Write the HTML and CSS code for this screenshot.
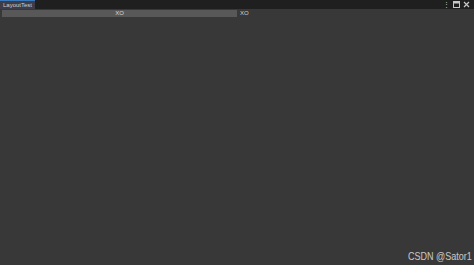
FILE: index.html
```html
<!DOCTYPE html>
<html>
<head>
<meta charset="utf-8">
<link rel="stylesheet" href="styles.css">
</head>
<body>
<div class="window">
  <div class="titlebar">
    <div class="tab">LayoutTest</div>
    <div class="controls">
      <span class="kebab">⋮</span>
      <svg class="max" width="7" height="7" viewBox="0 0 7 7"><rect x="0.5" y="0.5" width="6" height="6" fill="none" stroke="#c8c8c8" stroke-width="1"/><rect x="0.5" y="0.5" width="6" height="2" fill="#c8c8c8"/></svg>
      <svg class="close" width="7" height="7" viewBox="0 0 7 7"><path d="M1 1L6 6M6 1L1 6" stroke="#c8c8c8" stroke-width="1.2"/></svg>
    </div>
  </div>
  <div class="content">
    <div class="row">
      <div class="bar">XO</div>
      <div class="label">XO</div>
    </div>
  </div>
  <div class="watermark">CSDN @Sator1</div>
</div>
</body>
</html>
```
FILE: styles.css
```css
html, body { margin: 0; padding: 0; }
body { width: 474px; height: 265px; background: #383838; font-family: "Liberation Sans", Arial, sans-serif; overflow: hidden; }
.window { position: relative; width: 474px; height: 265px; display: flex; flex-direction: column; }
.titlebar { height: 9px; background: #1f1f1f; display: flex; align-items: stretch; justify-content: space-between; }
.tab { width: 35px; background: #3c3d48; border-top: 1px solid #3a79bb; color: #cfcfcf; font-size: 6px; line-height: 8px; padding-left: 3px; box-sizing: border-box; }
.controls { display: flex; align-items: center; gap: 3px; padding-right: 4px; }
.kebab { color: #c8c8c8; font-size: 7px; line-height: 9px; }
.content { flex: 1; background: #383838; padding: 1px 2px; }
.row { display: flex; align-items: center; gap: 3px; }
.bar { width: 235px; height: 7px; background: #585858; color: #d8d8d8; font-size: 6px; line-height: 7px; text-align: center; }
.label { color: #d0d0d0; font-size: 6px; line-height: 7px; }
.watermark { position: absolute; right: 2px; bottom: 3px; color: #e0e0e0; font-size: 11px; line-height: 11px; transform: scaleX(0.82); transform-origin: right center; opacity: 0.85; }
```
